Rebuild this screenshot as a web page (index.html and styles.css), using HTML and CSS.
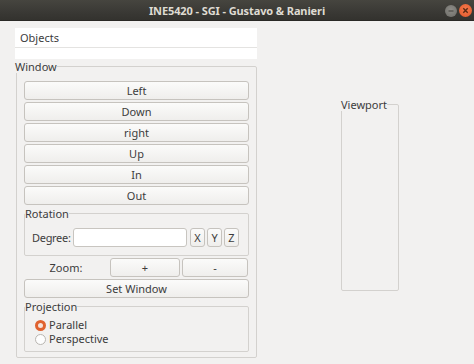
FILE: index.html
```html
<!DOCTYPE html>
<html>
<head>
<meta charset="utf-8">
<link rel="stylesheet" href="styles.css">
</head>
<body>
<div class="titlebar">
  <span class="title">INE5420 - SGI - Gustavo &amp; Ranieri</span>
  <div class="wbtns">
    <span class="wb min"><svg width="12" height="12" viewBox="0 0 12 12"><path d="M3.5 6h5" stroke="#55544f" stroke-width="1.4"/></svg></span>
    <span class="wb close"><svg width="13" height="13" viewBox="0 0 13 13"><path d="M4.3 4.3l4.4 4.4M8.7 4.3l-4.4 4.4" stroke="#5a2a14" stroke-width="1.4"/></svg></span>
  </div>
</div>
<div class="main">
  <div class="left">
    <div class="objects">
      <div class="obj-head">Objects</div>
    </div>
    <fieldset class="group window">
      <legend>Window</legend>
      <div class="stack">
        <button class="btn">Left</button>
        <button class="btn">Down</button>
        <button class="btn">right</button>
        <button class="btn">Up</button>
        <button class="btn">In</button>
        <button class="btn">Out</button>
      </div>
      <fieldset class="group rotation">
        <legend>Rotation</legend>
        <div class="rot-row">
          <span class="lbl">Degree:</span>
          <input class="field" type="text">
          <button class="btn axis">X</button>
          <button class="btn axis">Y</button>
          <button class="btn axis">Z</button>
        </div>
      </fieldset>
      <div class="zoom-row">
        <span class="zlbl">Zoom:</span>
        <button class="btn">+</button>
        <button class="btn">-</button>
      </div>
      <button class="btn setwin">Set Window</button>
      <fieldset class="group projection">
        <legend>Projection</legend>
        <label class="radio"><span class="dot on"></span>Parallel</label>
        <label class="radio"><span class="dot"></span>Perspective</label>
      </fieldset>
    </fieldset>
  </div>
  <fieldset class="group viewport">
    <legend>Viewport</legend>
  </fieldset>
</div>
</body>
</html>
```
FILE: styles.css
```css
* { box-sizing: border-box; }
html, body { margin: 0; padding: 0; }
body {
  width: 474px;
  height: 364px;
  overflow: hidden;
  background: #f2f1f0;
  font-family: "Noto Sans", "DejaVu Sans", sans-serif;
  font-size: 11px;
  color: #3c3c3c;
}
.titlebar {
  height: 21px;
  background: linear-gradient(#46453f, #3a3935 60%, #33322e);
  border-bottom: 1px solid #2a2926;
  display: flex;
  align-items: center;
  justify-content: center;
  position: relative;
}
.title {
  color: #dfdbd2;
  font-family: "Noto Sans", sans-serif;
  font-weight: bold;
  font-size: 11px;
  letter-spacing: -0.1px;
}
.wbtns {
  position: absolute;
  right: 2px;
  top: 4px;
  display: flex;
  gap: 2px;
}
.wb {
  width: 13px;
  height: 13px;
  border-radius: 50%;
  display: flex;
  align-items: center;
  justify-content: center;
}
.wb.min { background: radial-gradient(circle at 50% 40%, #8e8d88, #6c6b66); width: 12px; height: 12px; margin-top: 1px; }
.wb.close { background: radial-gradient(circle at 50% 40%, #f47a4c, #e0562a); }

.main {
  display: flex;
  align-items: flex-start;
}
.left {
  margin-left: 15px;
  width: 242px;
}
.objects {
  margin-top: 7px;
  height: 31px;
  background: #ffffff;
}
.obj-head {
  height: 20px;
  padding-left: 5px;
  line-height: 20px;
  border-bottom: 1px solid #e4e3e1;
  color: #3c3c3c;
}

fieldset.group {
  margin: 0;
  border: 1px solid #d3d1ce;
  border-radius: 2px;
  min-width: 0;
}
fieldset.group > legend {
  padding: 0;
  line-height: 13px;
  height: 13px;
  color: #3c3c3c;
}
.window {
  margin: 1px 0 0 1px !important;
  width: 241px;
  padding: 8px 7px 5px 7px;
}
.window > legend { margin-left: -9px; }
.stack {
  display: flex;
  flex-direction: column;
  gap: 2px;
}
.btn {
  display: block;
  height: 19px;
  margin: 0;
  padding: 0;
  border: 1px solid #c6c3be;
  border-radius: 3px;
  background: linear-gradient(#fbfbfa, #efeeec);
  font-family: inherit;
  font-size: 11px;
  color: #3c3c3c;
  line-height: 17px;
  text-align: center;
}
.rotation {
  margin-top: 2px !important;
  padding: 8px 9px 8px 7px;
}
.rotation > legend { margin-left: -7px; }
.rot-row {
  display: flex;
  align-items: center;
  gap: 2px;
}
.lbl { letter-spacing: -0.3px; }
.field {
  flex: 1;
  min-width: 0;
  height: 19px;
  margin: 0;
  border: 1px solid #c8c5c0;
  border-radius: 3px;
  background: #fff;
  padding: 0 3px;
}
.btn.axis {
  width: 15px;
  flex: none;
}
.btn.axis:first-of-type { margin-left: 1px; }
.zoom-row {
  margin-top: 2px;
  display: grid;
  grid-template-columns: 84px 70px 66px;
  gap: 2px;
  align-items: center;
}
.zlbl { text-align: center; }
.setwin {
  width: 100%;
  margin-top: 2px;
}
.projection {
  margin-top: 2px !important;
  padding: 5px 8px 5px 10px;
}
.projection > legend { margin-left: -10px; }
.radio {
  display: flex;
  align-items: center;
  height: 14px;
  line-height: 14px;
}
.dot {
  width: 11px;
  height: 11px;
  border-radius: 50%;
  border: 1px solid #b9b6b1;
  background: #fdfdfd;
  margin-right: 3px;
  flex: none;
}
.dot.on {
  border: 3px solid #e0622f;
  background: #f6e3da;
}
.viewport {
  margin: 77px 0 0 84px !important;
  width: 58px;
  height: 193px;
  padding: 0;
}
.viewport > legend { margin-left: -1px; }
```
